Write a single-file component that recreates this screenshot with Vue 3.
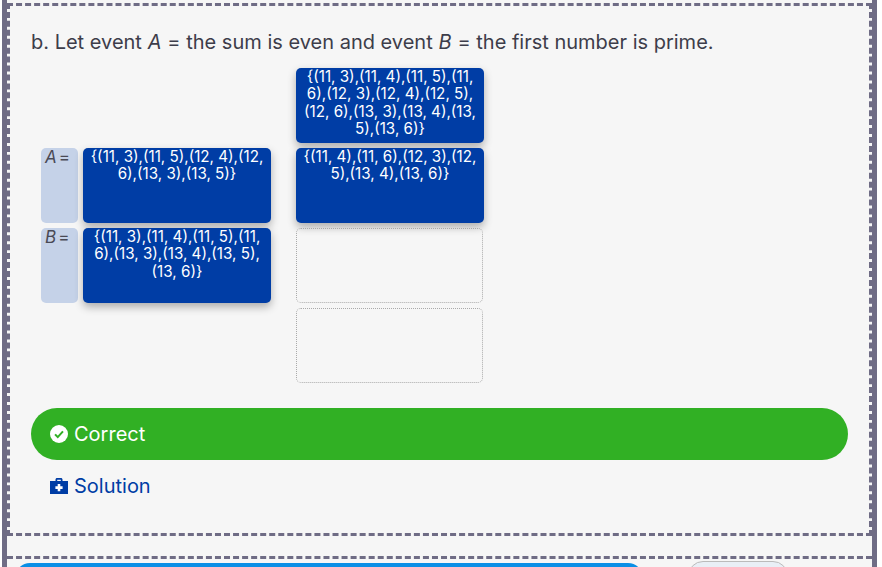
<script setup>
const leftRows = [
  { label: 'A', text: '{(11, 3),(11, 5),(12, 4),(12, 6),(13, 3),(13, 5)}' },
  { label: 'B', text: '{(11, 3),(11, 4),(11, 5),(11, 6),(13, 3),(13, 4),(13, 5),(13, 6)}' },
]
const answers = [
  '{(11, 3),(11, 4),(11, 5),(11, 6),(12, 3),(12, 4),(12, 5),(12, 6),(13, 3),(13, 4),(13, 5),(13, 6)}',
  '{(11, 4),(11, 6),(12, 3),(12, 5),(13, 4),(13, 6)}',
  '',
  '',
]
</script>

<template>
  <div class="page">
    <div class="frame">
      <section class="card">
        <p class="question">
          b. Let event <i class="var">A</i> = the sum is even and event <i class="var">B</i> = the first number is prime.
        </p>
        <div class="match">
          <div class="left">
            <div v-for="row in leftRows" :key="row.label" class="row">
              <div class="label"><i>{{ row.label }}</i><span class="eq">=</span></div>
              <div class="tile">{{ row.text }}</div>
            </div>
          </div>
          <div class="right">
            <template v-for="(text, i) in answers" :key="i">
              <div v-if="text" class="tile">{{ text }}</div>
              <div v-else class="slot"></div>
            </template>
          </div>
        </div>
        <div class="result">
          <svg class="check" viewBox="0 0 20 20" width="18" height="18">
            <circle cx="10" cy="10" r="10" fill="#fff" />
            <path d="M5.6 10.400l3 3 5.800-6.400" fill="none" stroke="#31b024" stroke-width="2.2" />
          </svg>
          <span>Correct</span>
        </div>
        <a class="solution">
          <svg viewBox="0 0 18 16" width="18" height="16">
            <path d="M5.500 3V1.600C5.500.7 6.200 0 7.100 0h3.800c.9 0 1.600.7 1.600 1.600V3H18v13H0V3zM7.200 3h3.600V1.700H7.200z" fill="#003da5" fill-rule="evenodd" />
            <path d="M7.700 6h2.600v2.300h2.300v2.600h-2.300v2.300H7.700v-2.300H5.400V8.300h2.300z" fill="#fff" />
          </svg>
          <span>Solution</span>
        </a>
      </section>
      <section class="next">
        <div class="next-bar"></div>
        <div class="next-pill"></div>
      </section>
    </div>
  </div>
</template>

<style>
html, body {
  margin: 0;
  background: #fff;
  overflow: hidden;
}
</style>

<style scoped>
.page {
  width: 882px;
  height: 567px;
  overflow: hidden;
  box-sizing: border-box;
  padding: 0 5px 0 2px;
  font-family: Inter, "Liberation Sans", sans-serif;
}
.frame {
  height: 567px;
  box-sizing: border-box;
  border-left: 5px solid #6f6c85;
  border-right: 5px solid #6f6c85;
  padding-top: 3px;
  background: #f6f6f6;
}
.card {
  height: 533px;
  box-sizing: border-box;
  border: 3px dashed #6f6c85;
  padding: 21px 21px 0 21px;
}
.question {
  margin: 0;
  font-size: 20px;
  line-height: 30px;
  color: #3d3d4a;
}
.var {
  margin: 0 0.2px;
}
.match {
  display: flex;
  margin: 11px 0 0 10px;
  gap: 25px;
}
.left {
  display: flex;
  flex-direction: column;
  gap: 5px;
  width: 230px;
  margin-top: 80px;
}
.row {
  display: flex;
  gap: 5px;
}
.right {
  display: flex;
  flex-direction: column;
  gap: 5px;
  width: 187px;
}
.label {
  width: 37px;
  height: 75px;
  flex: none;
  box-sizing: border-box;
  padding: 0 0 0 4px;
  border-radius: 5px;
  background: #c5d2e8;
  color: #4a4a55;
  font-size: 17px;
  line-height: 19px;
}
.eq {
  margin-left: 2px;
}
.tile {
  width: 188px;
  height: 75px;
  flex: none;
  box-sizing: border-box;
  padding: 0 5px;
  border-radius: 5px;
  background: #003da5;
  box-shadow: 0 4px 8px rgba(0, 0, 0, 0.3);
  color: #fff;
  font-size: 15.2px;
  line-height: 17.25px;
  text-align: center;
}
.slot {
  width: 187px;
  height: 75px;
  flex: none;
  box-sizing: border-box;
  border: 1px dotted #aaa;
  border-radius: 5px;
}
.result {
  display: flex;
  align-items: center;
  gap: 6px;
  height: 52px;
  margin-top: 25px;
  padding-left: 19px;
  border-radius: 26px;
  background: #31b024;
  color: #fff;
  font-size: 20px;
}
.solution {
  display: flex;
  align-items: center;
  gap: 6px;
  margin: 11px 0 0 19px;
  height: 30px;
  color: #003da5;
  font-size: 20px;
}
.next {
  position: relative;
  height: 30px;
  margin-top: 20px;
  border-top: 3px dashed #6f6c85;
}
.next-bar {
  position: absolute;
  left: 8px;
  top: 4px;
  width: 628px;
  height: 30px;
  border-radius: 20px;
  background: #0a8fe6;
}
.next-pill {
  position: absolute;
  left: 681px;
  top: 2px;
  width: 100px;
  height: 30px;
  box-sizing: border-box;
  border: 1px solid #bbb;
  border-radius: 20px;
  background: #e9eff6;
}
</style>
